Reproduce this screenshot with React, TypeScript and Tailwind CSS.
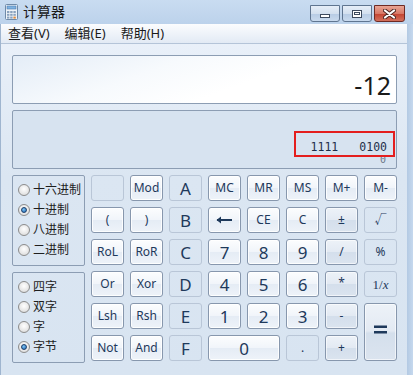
import React from "react";

type V = "n" | "o" | "d";

const VS: Record<V, string> = {
  n: "border-[#8797ad] bg-[linear-gradient(to_bottom,#fcfdfe_0%,#f1f5fa_48%,#e5ecf5_52%,#eef3f9_100%)] shadow-[inset_0_0_0_1px_rgba(255,255,255,0.85)]",
  o: "border-[#8797ad] bg-[linear-gradient(to_bottom,#edf2f8_0%,#e3eaf3_48%,#d4dfec_52%,#dbe4ef_100%)] shadow-[inset_0_0_0_1px_rgba(255,255,255,0.6)]",
  d: "border-[#b9c6d7] bg-transparent",
};

function Btn({
  children,
  v = "n",
  cls = "",
}: {
  children?: React.ReactNode;
  v?: V;
  cls?: string;
}) {
  return (
    <div
      className={
        "flex items-center justify-center rounded-[3px] border text-[#1e395b] leading-none " +
        VS[v] +
        " " +
        cls
      }
    >
      {children}
    </div>
  );
}

function Radio({ label, on = false }: { label: string; on?: boolean }) {
  return (
    <div className="flex h-[20px] items-center gap-[3px] whitespace-nowrap">
      <div className="flex h-[12px] w-[12px] shrink-0 items-center justify-center rounded-full border border-[#8c8c8c] bg-[radial-gradient(circle_at_50%_40%,#ffffff,#d6d6d6)]">
        {on && (
          <div className="h-[6px] w-[6px] rounded-full border border-[#1d3f6b] bg-[radial-gradient(circle_at_40%_35%,#7fc4f5,#1b65b0)]" />
        )}
      </div>
      <span className="text-[12px] leading-none text-[#1e1e1e]">{label}</span>
    </div>
  );
}

function CalcIcon() {
  return (
    <svg width="13" height="16" viewBox="0 0 13 16">
      <rect x="0.5" y="0.5" width="12" height="15" rx="1" fill="#eef3f8" stroke="#6f8aa8" />
      <rect x="2" y="2" width="9" height="3" fill="#7fb2e0" stroke="#4a7bb0" strokeWidth="0.6" />
      {[0, 1, 2].map((r) =>
        [0, 1, 2].map((c) => (
          <rect
            key={r + "-" + c}
            x={2 + c * 3.2}
            y={7 + r * 2.8}
            width="2.4"
            height="2"
            fill={c === 2 && r === 2 ? "#e08a3c" : "#8aa2bd"}
          />
        ))
      )}
    </svg>
  );
}

export default function App() {
  return (
    <div className="flex h-[375px] w-[413px] flex-col overflow-hidden bg-[#c3d7ee] font-['Noto_Sans','Noto_Sans_CJK_SC',sans-serif]">
      {/* title bar */}
      <div className="flex h-[24px] shrink-0 items-center bg-[linear-gradient(to_bottom,#c9dcf1,#bcd2eb)] pl-[5px] pr-[8px]">
        <CalcIcon />
        <span className="ml-[5px] text-[14px] leading-none text-[#1a1a1a]">计算器</span>
        <div className="ml-auto flex self-start pt-[5px]">
          <div className="flex h-[17px] w-[30px] items-center justify-center rounded-b-[3px] border border-[#5f7590] bg-[linear-gradient(to_bottom,#e6eef8_0%,#d3e0ef_50%,#b6cbe4_51%,#c9daee_100%)]">
            <div className="mt-[4px] h-[4px] w-[10px] border border-[#3c4a5e] bg-white" />
          </div>
          <div className="ml-[2px] flex h-[17px] w-[30px] items-center justify-center rounded-b-[3px] border border-[#5f7590] bg-[linear-gradient(to_bottom,#e6eef8_0%,#d3e0ef_50%,#b6cbe4_51%,#c9daee_100%)]">
            <div className="flex h-[8px] w-[10px] items-center justify-center border border-[#3c4a5e] bg-white">
              <div className="h-[3px] w-[6px] border border-[#3c4a5e]" />
            </div>
          </div>
          <div className="ml-[2px] flex h-[17px] w-[31px] items-center justify-center rounded-b-[3px] border border-[#6e2a24] bg-[linear-gradient(to_bottom,#e8a595_0%,#d87866_50%,#c3412f_51%,#d2705c_100%)]">
            <svg width="13" height="10" viewBox="0 0 13 10">
              <path d="M2 1.5 L11 8.5 M11 1.5 L2 8.5" stroke="#4a2420" strokeWidth="4" strokeLinecap="round" />
              <path d="M2 1.5 L11 8.5 M11 1.5 L2 8.5" stroke="#ffffff" strokeWidth="2.2" strokeLinecap="round" />
            </svg>
          </div>
        </div>
      </div>

      <div className="flex min-h-0 flex-1">
        <div className="flex w-[407px] flex-col border-l border-[#9fb5cf]">
          {/* menu bar */}
          <div className="flex h-[20px] shrink-0 items-center gap-[15px] border-b border-[#b4c4d8] bg-[linear-gradient(to_bottom,#fbfcfe,#e2eaf4)] pl-[7px] text-[13px] leading-none text-[#1a1a1a]">
            <span>查看(V)</span>
            <span>编辑(E)</span>
            <span>帮助(H)</span>
          </div>

          {/* body */}
          <div className="flex flex-1 flex-col bg-[linear-gradient(to_bottom,#e9f0f9,#dbe6f2_40%,#d8e4f1)] pl-[11px] pr-[10px] pt-[11px]">
            {/* display 1 */}
            <div className="flex h-[49px] items-end justify-end rounded-[2px] border border-[#8c9db3] bg-[linear-gradient(160deg,#e4edf7_0%,#f7fafd_35%,#ffffff_60%)] pb-[5px] pr-[5px]">
              <span className="text-[25px] leading-none text-[#1a1a1a]">-12</span>
            </div>
            {/* display 2 */}
            <div className="relative mt-[6px] flex h-[59px] flex-col items-end justify-end rounded-[2px] border border-[#8c9db3] bg-[#d7e3f0] pb-[3px] pr-[9px] font-['DejaVu_Sans_Mono',monospace]">
              <div className="flex gap-[21px] text-[11.5px] leading-[14px] text-[#1e2f4a]">
                <span>1111</span>
                <span>0100</span>
              </div>
              <div className="pr-[1px] text-[10px] leading-[11px] text-[#6b7686]">0</div>
              <div className="pointer-events-none absolute left-[281px] top-[20px] h-[26px] w-[101px] border-2 border-[#e41e1e]" />
            </div>

            {/* keypad */}
            <div className="mt-[6px] flex gap-[6px]">
              <div className="flex w-[73px] flex-col gap-[6px]">
                <div className="flex h-[91px] flex-col justify-center rounded-[2px] border border-[#8c9db3] pl-[5px] pb-[1px]">
                  <Radio label="十六进制" />
                  <Radio label="十进制" on />
                  <Radio label="八进制" />
                  <Radio label="二进制" />
                </div>
                <div className="flex h-[91px] flex-col justify-center rounded-[2px] border border-[#8c9db3] pl-[5px] pb-[1px]">
                  <Radio label="四字" />
                  <Radio label="双字" />
                  <Radio label="字" />
                  <Radio label="字节" on />
                </div>
              </div>

              <div className="grid grid-cols-[repeat(8,33px)] grid-rows-[repeat(6,26px)] gap-[6px] text-[12px]">
                {/* row 1 */}
                <Btn v="d" />
                <Btn>Mod</Btn>
                <Btn v="d" cls="text-[17px]">A</Btn>
                <Btn>MC</Btn>
                <Btn>MR</Btn>
                <Btn>MS</Btn>
                <Btn>M+</Btn>
                <Btn>M-</Btn>
                {/* row 2 */}
                <Btn>(</Btn>
                <Btn>)</Btn>
                <Btn v="d" cls="text-[17px]">B</Btn>
                <Btn>
                  <svg width="17" height="8" viewBox="0 0 17 8">
                    <path d="M1 4 H16" stroke="#1e395b" strokeWidth="2" />
                    <path d="M0.5 4 L5 0.5 L5 7.5 Z" fill="#1e395b" />
                  </svg>
                </Btn>
                <Btn>CE</Btn>
                <Btn>C</Btn>
                <Btn v="o">±</Btn>
                <Btn v="d">√</Btn>
                {/* row 3 */}
                <Btn>RoL</Btn>
                <Btn>RoR</Btn>
                <Btn v="d" cls="text-[17px]">C</Btn>
                <Btn cls="text-[17px]">7</Btn>
                <Btn cls="text-[17px]">8</Btn>
                <Btn cls="text-[17px]">9</Btn>
                <Btn v="o">/</Btn>
                <Btn v="d">%</Btn>
                {/* row 4 */}
                <Btn>Or</Btn>
                <Btn>Xor</Btn>
                <Btn v="d" cls="text-[17px]">D</Btn>
                <Btn cls="text-[17px]">4</Btn>
                <Btn cls="text-[17px]">5</Btn>
                <Btn cls="text-[17px]">6</Btn>
                <Btn v="o" cls="pb-[3px]">*</Btn>
                <Btn v="d">
                  <span className="font-['Liberation_Serif',serif] text-[13px]">
                    1/<i>x</i>
                  </span>
                </Btn>
                {/* row 5 */}
                <Btn>Lsh</Btn>
                <Btn>Rsh</Btn>
                <Btn v="d" cls="text-[17px]">E</Btn>
                <Btn cls="text-[17px]">1</Btn>
                <Btn cls="text-[17px]">2</Btn>
                <Btn cls="text-[17px]">3</Btn>
                <Btn v="o">-</Btn>
                <Btn v="o" cls="row-span-2 pb-[5px]">
                  <svg width="13" height="9" viewBox="0 0 13 9">
                    <rect x="0" y="0.5" width="13" height="2.5" fill="#1e395b" />
                    <rect x="0" y="6" width="13" height="2.5" fill="#1e395b" />
                  </svg>
                </Btn>
                {/* row 6 */}
                <Btn>Not</Btn>
                <Btn>And</Btn>
                <Btn v="d" cls="text-[17px]">F</Btn>
                <Btn cls="col-span-2 text-[17px]">0</Btn>
                <Btn v="d">.</Btn>
                <Btn v="o">+</Btn>
              </div>
            </div>
          </div>
        </div>
        <div className="flex-1 bg-[linear-gradient(to_right,#b3c9e3,#c6d9ee)]" />
      </div>
    </div>
  );
}
